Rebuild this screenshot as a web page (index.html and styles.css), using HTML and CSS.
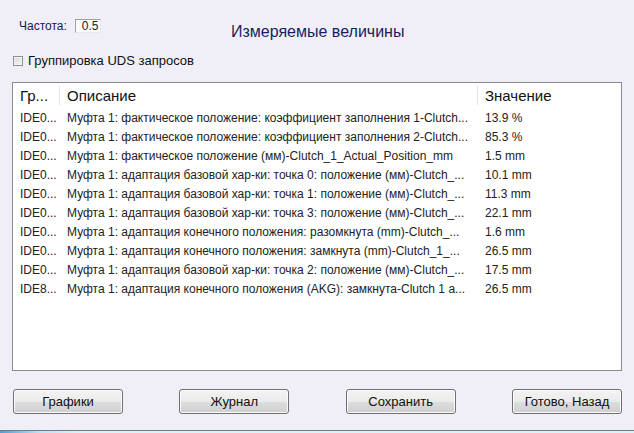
FILE: index.html
```html
<!DOCTYPE html>
<html lang="ru">
<head>
<meta charset="utf-8">
<title>Измеряемые величины</title>
<link rel="stylesheet" href="styles.css">
</head>
<body>
<div class="window">
  <div class="top">
    <div class="freq">
      <span class="freq-label">Частота:</span>
      <span class="freq-input">0.5</span>
    </div>
    <div class="title">Измеряемые величины</div>
  </div>
  <div class="chk-row">
    <span class="chk"></span>
    <span class="chk-label">Группировка UDS запросов</span>
  </div>
  <div class="list">
    <div class="list-head">
      <div class="c1 h">Гр...</div>
      <div class="c2 h">Описание</div>
      <div class="c3 h">Значение</div>
    </div>
    <div class="row"><div class="c1">IDE0...</div><div class="c2">Муфта 1: фактическое положение: коэффициент заполнения 1-Clutch...</div><div class="c3">13.9 %</div></div>
    <div class="row"><div class="c1">IDE0...</div><div class="c2">Муфта 1: фактическое положение: коэффициент заполнения 2-Clutch...</div><div class="c3">85.3 %</div></div>
    <div class="row"><div class="c1">IDE0...</div><div class="c2">Муфта 1: фактическое положение (мм)-Clutch_1_Actual_Position_mm</div><div class="c3">1.5 mm</div></div>
    <div class="row"><div class="c1">IDE0...</div><div class="c2">Муфта 1: адаптация базовой хар-ки: точка 0: положение (мм)-Clutch_...</div><div class="c3">10.1 mm</div></div>
    <div class="row"><div class="c1">IDE0...</div><div class="c2">Муфта 1: адаптация базовой хар-ки: точка 1: положение (мм)-Clutch_...</div><div class="c3">11.3 mm</div></div>
    <div class="row"><div class="c1">IDE0...</div><div class="c2">Муфта 1: адаптация базовой хар-ки: точка 3: положение (мм)-Clutch_...</div><div class="c3">22.1 mm</div></div>
    <div class="row"><div class="c1">IDE0...</div><div class="c2">Муфта 1: адаптация конечного положения: разомкнута (mm)-Clutch_...</div><div class="c3">1.6 mm</div></div>
    <div class="row"><div class="c1">IDE0...</div><div class="c2">Муфта 1: адаптация конечного положения: замкнута (mm)-Clutch_1_...</div><div class="c3">26.5 mm</div></div>
    <div class="row"><div class="c1">IDE0...</div><div class="c2">Муфта 1: адаптация базовой хар-ки: точка 2: положение (мм)-Clutch_...</div><div class="c3">17.5 mm</div></div>
    <div class="row"><div class="c1">IDE8...</div><div class="c2">Муфта 1: адаптация конечного положения (AKG): замкнута-Clutch 1 a...</div><div class="c3">26.5 mm</div></div>
  </div>
  <div class="buttons">
    <button class="btn">Графики</button>
    <button class="btn">Журнал</button>
    <button class="btn">Сохранить</button>
    <button class="btn">Готово, Назад</button>
  </div>
  <div class="frame-bottom"></div>
</div>
</body>
</html>
```
FILE: styles.css
```css
html, body {
  margin: 0;
  padding: 0;
}
body {
  background: #f0eff7;
  font-family: "Liberation Sans", Arial, sans-serif;
  color: #111;
  width: 634px;
  height: 433px;
  overflow: hidden;
}
.window {
  display: flex;
  flex-direction: column;
  height: 433px;
}
.top {
  display: flex;
  align-items: flex-start;
  height: 54px;
  padding-left: 19px;
  box-sizing: border-box;
}
.freq {
  width: 212px;
  display: flex;
  align-items: center;
  gap: 8px;
  margin-top: 19px;
}
.freq-label {
  font-size: 12px;
  line-height: 14px;
  color: #1a1a4a;
}
.freq-input {
  display: inline-block;
  width: 26px;
  height: 14px;
  box-sizing: border-box;
  border-top: 1px solid #a0a0a0;
  border-left: 1px solid #a0a0a0;
  border-right: 1px solid #e8e8e8;
  border-bottom: 1px solid #e8e8e8;
  background: #fafafa;
  font-size: 12px;
  line-height: 12px;
  padding-left: 6px;
  color: #222;
}
.title {
  margin-top: 23px;
  font-size: 16px;
  line-height: 18px;
  color: #1c1c5c;
}
.chk-row {
  display: flex;
  align-items: center;
  height: 14px;
  padding-left: 13px;
  gap: 5px;
}
.chk {
  width: 10px;
  height: 10px;
  box-sizing: border-box;
  border: 1px solid #8e8f8f;
  background: linear-gradient(135deg, #d8d8d8, #f6f6f6);
  box-shadow: inset 0 0 0 1px #f4f4f4;
}
.chk-label {
  font-size: 13px;
  line-height: 14px;
  color: #111;
}
.list {
  margin: 14px 12px 0 12px;
  height: 289px;
  box-sizing: border-box;
  border: 1px solid #8a8a92;
  background: #fff;
}
.list-head {
  display: flex;
  height: 25px;
  align-items: center;
}
.row {
  display: flex;
  height: 19px;
  align-items: center;
  font-size: 12px;
  color: #222;
}
.c1 {
  width: 47px;
  padding-left: 7px;
  box-sizing: border-box;
  white-space: nowrap;
  overflow: hidden;
}
.c2 {
  width: 418px;
  padding-left: 7px;
  box-sizing: border-box;
  white-space: nowrap;
  overflow: hidden;
}
.c3 {
  flex: 1;
  padding-left: 7px;
  box-sizing: border-box;
  white-space: nowrap;
}
.h {
  font-size: 15px;
  line-height: 19px;
  color: #111;
  border-right: 1px solid #e4e4e8;
}
.c3.h {
  border-right: none;
}
.buttons {
  display: flex;
  justify-content: space-between;
  padding: 0 12px 0 13px;
  margin-top: 18px;
}
.btn {
  width: 110px;
  height: 25px;
  box-sizing: border-box;
  border: 1px solid #707070;
  border-radius: 3px;
  background: linear-gradient(#f3f3f3 0%, #ebebeb 50%, #dddddd 51%, #cfcfcf 100%);
  box-shadow: inset 0 0 0 1px #fbfbfb;
  font-family: "Liberation Sans", Arial, sans-serif;
  font-size: 13px;
  color: #111;
  padding: 0;
}
.frame-bottom {
  margin-top: 16px;
  height: 3px;
  box-sizing: border-box;
  border-top: 1px solid #6d7c8b;
  background: linear-gradient(90deg, #4a9ed8 0px, #bfe3f4 40px, #dbf2f8 80px);
}
```
